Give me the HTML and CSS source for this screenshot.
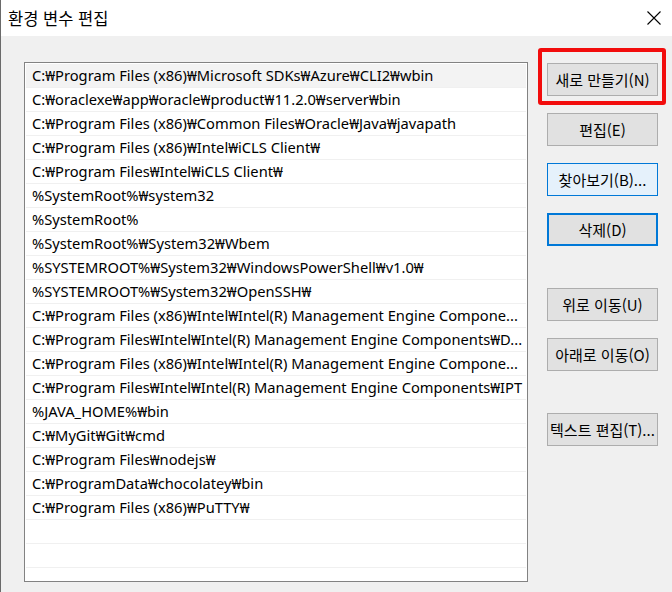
FILE: index.html
```html
<!DOCTYPE html>
<html lang="ko">
<head>
<meta charset="utf-8">
<title>환경 변수 편집</title>
<link rel="stylesheet" href="styles.css">
</head>
<body>
<div class="window">
  <div class="titlebar">
    <span class="title">환경 변수 편집</span>
    <svg class="close" width="14" height="14" viewBox="0 0 14 14"><path d="M0.5 0.5 L13.5 13.5 M13.5 0.5 L0.5 13.5" stroke="#000" stroke-width="1.1" fill="none"/></svg>
  </div>
  <div class="content">
    <div class="list">
      <div class="row hover">C:₩Program Files (x86)₩Microsoft SDKs₩Azure₩CLI2₩wbin</div>
      <div class="row">C:₩oraclexe₩app₩oracle₩product₩11.2.0₩server₩bin</div>
      <div class="row">C:₩Program Files (x86)₩Common Files₩Oracle₩Java₩javapath</div>
      <div class="row">C:₩Program Files (x86)₩Intel₩iCLS Client₩</div>
      <div class="row">C:₩Program Files₩Intel₩iCLS Client₩</div>
      <div class="row">%SystemRoot%₩system32</div>
      <div class="row">%SystemRoot%</div>
      <div class="row">%SystemRoot%₩System32₩Wbem</div>
      <div class="row">%SYSTEMROOT%₩System32₩WindowsPowerShell₩v1.0₩</div>
      <div class="row">%SYSTEMROOT%₩System32₩OpenSSH₩</div>
      <div class="row">C:₩Program Files (x86)₩Intel₩Intel(R) Management Engine Compone...</div>
      <div class="row">C:₩Program Files₩Intel₩Intel(R) Management Engine Components₩D...</div>
      <div class="row">C:₩Program Files (x86)₩Intel₩Intel(R) Management Engine Compone...</div>
      <div class="row">C:₩Program Files₩Intel₩Intel(R) Management Engine Components₩IPT</div>
      <div class="row">%JAVA_HOME%₩bin</div>
      <div class="row">C:₩MyGit₩Git₩cmd</div>
      <div class="row">C:₩Program Files₩nodejs₩</div>
      <div class="row">C:₩ProgramData₩chocolatey₩bin</div>
      <div class="row">C:₩Program Files (x86)₩PuTTY₩</div>
      <div class="row"></div>
      <div class="row"></div>
      <div class="row"></div>
    </div>
    <div class="buttons">
      <button class="btn">새로 만들기(N)</button>
      <button class="btn">편집(E)</button>
      <button class="btn hot">찾아보기(B)...</button>
      <button class="btn default">삭제(D)</button>
      <button class="btn group">위로 이동(U)</button>
      <button class="btn">아래로 이동(O)</button>
      <button class="btn group">텍스트 편집(T)...</button>
    </div>
  </div>
  <div class="highlight"></div>
</div>
</body>
</html>
```
FILE: styles.css
```css
html, body {
  margin: 0;
  padding: 0;
  width: 672px;
  height: 592px;
  overflow: hidden;
  background: #f0f0f0;
}

.window {
  position: relative;
  width: 672px;
  height: 592px;
  box-sizing: border-box;
  border-left: 1px solid #6a6a6a;
  background: #f0f0f0;
  font-family: "Noto Sans", "Noto Sans CJK KR", sans-serif;
  color: #000;
}

.titlebar {
  height: 36px;
  background: #fff;
  display: flex;
  align-items: center;
  justify-content: space-between;
  padding: 0 11px 0 7px;
}

.title {
  font-family: "Noto Sans CJK KR", sans-serif;
  font-size: 16.5px;
  margin-top: -1px;
}

.close {
  display: block;
}

.content {
  display: flex;
  align-items: flex-start;
  padding: 26px 0 0 23px;
}

.list {
  width: 504px;
  height: 520px;
  box-sizing: border-box;
  border: 1px solid #828282;
  background: #fff;
  padding: 1px 1px 0 1px;
  overflow: hidden;
}

.row {
  height: 24px;
  box-sizing: border-box;
  border-bottom: 1px solid #f0f0f0;
  padding-left: 6px;
  font-size: 14.7px;
  line-height: 23px;
  white-space: nowrap;
  overflow: hidden;
}

.row.hover {
  background: #f3f3f3;
}

.buttons {
  display: flex;
  flex-direction: column;
  margin-left: 19px;
  padding-top: 1px;
}

.btn {
  width: 111px;
  height: 33px;
  box-sizing: border-box;
  margin: 0 0 17px 0;
  padding: 0;
  border: 1px solid #adadad;
  background: #e1e1e1;
  font-family: "Noto Sans CJK KR", sans-serif;
  font-size: 15px;
  color: #000;
  border-radius: 0;
  white-space: nowrap;
  overflow: visible;
}

.btn.hot {
  background: #e5f1fb;
  border-color: #0078d7;
}

.btn.default {
  border: 2px solid #0078d7;
}

.btn.group {
  margin-top: 25px;
}

.highlight {
  position: absolute;
  left: 537px;
  top: 48px;
  width: 128px;
  height: 57px;
  box-sizing: border-box;
  border: 4px solid #f20c0c;
  border-radius: 3px;
}
```
